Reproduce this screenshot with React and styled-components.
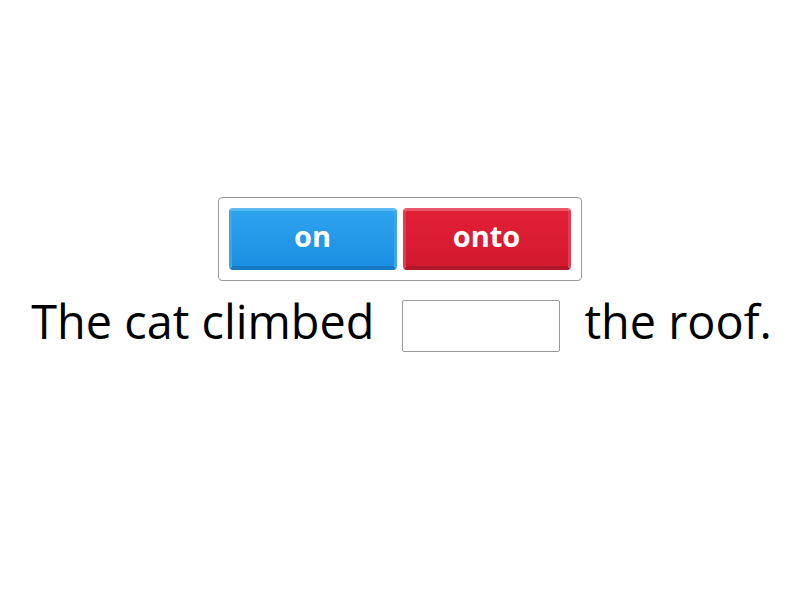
import React from "react";
import styled, { createGlobalStyle } from "styled-components";

const Global = createGlobalStyle`
  html, body { margin: 0; padding: 0; background: #fff; }
  body { font-family: "Open Sans", "Noto Sans", sans-serif; }
`;

const Page = styled.div`
  display: flex;
  flex-direction: column;
  align-items: center;
  padding-top: 197px;
  width: 800px;
`;

const Choices = styled.div`
  display: flex;
  gap: 6px;
  padding: 10px;
  border: 1px solid #9a9a9a;
  border-radius: 4px;
  margin-left: -1px;
`;

const palettes = {
  blue: {
    bg: "linear-gradient(#2ea3ee, #1b8fe2)",
    top: "#5cb9f3",
    side: "#3aa6ee",
    bottom: "#1779c4",
  },
  red: {
    bg: "linear-gradient(#e21f36, #d21a2e)",
    top: "#e8566a",
    side: "#e23c50",
    bottom: "#b0182a",
  },
};

const Choice = styled.button`
  box-sizing: border-box;
  width: 168px;
  height: 62px;
  border-radius: 4px;
  border-style: solid;
  border-width: 3px 3px 4px 3px;
  border-color: ${(p) => palettes[p.$tone].top} ${(p) => palettes[p.$tone].side}
    ${(p) => palettes[p.$tone].bottom} ${(p) => palettes[p.$tone].side};
  background: ${(p) => palettes[p.$tone].bg};
  color: #fff;
  font-family: "Open Sans", "Noto Sans", sans-serif;
  font-weight: 700;
  font-size: 29px;
  padding: 0 0 6px;
  display: flex;
  align-items: center;
  justify-content: center;
  cursor: pointer;
`;

const Sentence = styled.div`
  display: flex;
  align-items: center;
  margin-top: 18px;
  font-size: 46.8px;
  color: #000;
  line-height: 52px;
  white-space: pre;
  margin-left: 3px;
`;

const Blank = styled.div`
  box-sizing: border-box;
  width: 158px;
  height: 52px;
  border: 1px solid #999;
  border-radius: 2px;
  margin: 1px 24px 0 28px;
  background: #fff;
`;

const Word = styled.span`
  display: block;
  margin-top: -10px;
`;

export default function App() {
  return (
    <>
      <Global />
      <Page>
        <Choices>
          <Choice $tone="blue">on</Choice>
          <Choice $tone="red">onto</Choice>
        </Choices>
        <Sentence>
          <Word>The cat climbed</Word>
          <Blank />
          <Word>the roof.</Word>
        </Sentence>
      </Page>
    </>
  );
}
